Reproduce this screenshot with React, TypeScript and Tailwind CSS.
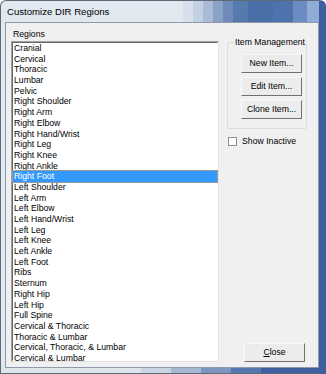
import React from "react";

const items = [
  "Cranial","Cervical","Thoracic","Lumbar","Pelvic","Right Shoulder","Right Arm","Right Elbow","Right Hand/Wrist","Right Leg","Right Knee","Right Ankle","Right Foot","Left Shoulder","Left Arm","Left Elbow","Left Hand/Wrist","Left Leg","Left Knee","Left Ankle","Left Foot","Ribs","Sternum","Right Hip","Left Hip","Full Spine","Cervical & Thoracic","Thoracic & Lumbar","Cervical, Thoracic, & Lumbar","Cervical & Lumbar",
];

function Btn({ children, className = "" }: { children: React.ReactNode; className?: string }) {
  return (
    <div className={"flex items-center justify-center h-[19px] w-[61px] bg-[#ececec] border border-t-[#f8f8f8] border-l-[#f8f8f8] border-r-[#707070] border-b-[#707070] text-[8.7px] text-black whitespace-nowrap " + className}>
      {children}
    </div>
  );
}

export default function App() {
  return (
    <div className="w-[326px] h-[374px] overflow-hidden bg-white" style={{ fontFamily: '"Liberation Sans", Arial, sans-serif' }}>
      <div className="w-[326px] h-[374px] rounded-t-[6px] border-l border-t border-[#5f6a78] border-r-[7px] border-r-[#3d5e9f] flex flex-col bg-[#e2e8ef]">
        {/* title bar */}
        <div className="h-[21px] flex shrink-0">
          <div className="w-[182px] shrink-0 flex items-center pl-[6px] pt-[1px] text-[9.6px] text-black">Customize DIR Regions</div>
          <div className="w-[10px] bg-[#d6dfeb]" />
          <div className="w-[10px] bg-[#c3d0e3]" />
          <div className="w-[10px] bg-[#a9bbd6]" />
          <div className="w-[10px] bg-[#8aa2c8]" />
          <div className="w-[10px] bg-[#6d8abb]" />
          <div className="w-[15px] bg-[#577aae]" />
          <div className="w-[25px] bg-[#4a6ea8]" />
          <div className="w-[20px] bg-[#4d72ad]" />
          <div className="w-[14px] bg-[#6a8cc2]" />
          <div className="grow bg-[#8fabd6]" />
        </div>
        {/* middle */}
        <div className="grow flex pl-[4px]">
          <div className="w-[314px] shrink-0 bg-[#f0f0f0] border border-[#8e9aa8] flex">
            <div className="flex flex-col pl-[5px] pt-[4px]">
              <div className="h-[14px] pl-[2px] text-[8.7px] leading-[14px] text-black">Regions</div>
              <div className="w-[208px] h-[321px] border border-t-[#a0a0a0] border-l-[#a0a0a0] border-r-[#e3e3e3] border-b-[#e3e3e3] bg-white">
                <div className="h-full border border-t-[#696969] border-l-[#696969] border-r-white border-b-white">
                  {items.map((t) => (
                    <div
                      key={t}
                      className={
                        "h-[10.7px] leading-[10.7px] pl-[1px] text-[8.7px] whitespace-nowrap " +
                        (t === "Right Foot" ? "bg-[#3399ff] text-white outline outline-1 outline-[#9a9a9a]" : "text-black")
                      }
                    >
                      {t}
                    </div>
                  ))}
                </div>
              </div>
            </div>
            <div className="flex flex-col ml-[8px] w-[80px] pt-[19px]">
              <div className="relative h-[87px] border border-[#d5dfe5] rounded-[2px] flex flex-col items-start pt-[11px] gap-[4px]">
                <div className="absolute -top-[6px] left-[6px] px-[1px] bg-[#f0f0f0] text-[8.7px] leading-[11px] text-black whitespace-nowrap">Item Management</div>
                <Btn className="ml-[13px]">New Item...</Btn>
                <Btn className="ml-[13px]">Edit Item...</Btn>
                <Btn className="ml-[13px]">Clone Item...</Btn>
              </div>
              <div className="flex items-center mt-[6px] ml-[1px] gap-[5px]">
                <div className="w-[9px] h-[9px] border border-[#8f8f8f] bg-white" />
                <span className="text-[8.7px] text-black">Show Inactive</span>
              </div>
              <div className="grow" />
              <Btn className="ml-[17px] mb-[5px]"><span><u>C</u>lose</span></Btn>
            </div>
          </div>
        </div>
        {/* bottom frame */}
        <div className="h-[6px] flex shrink-0 border-b border-[#5f6a78]">
          <div className="w-[140px] bg-[#dfe5ed]" />
          <div className="w-[30px] bg-[#c9d3e2]" />
          <div className="w-[30px] bg-[#a6b7d2]" />
          <div className="w-[30px] bg-[#7d96c0]" />
          <div className="w-[30px] bg-[#5676ae]" />
          <div className="grow bg-[#3d5e9f]" />
        </div>
      </div>
    </div>
  );
}
